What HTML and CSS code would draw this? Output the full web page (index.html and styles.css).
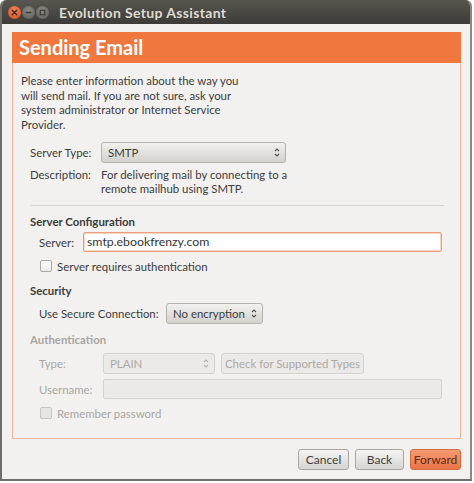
FILE: index.html
```html
<!DOCTYPE html>
<html>
<head>
<meta charset="utf-8">
<link rel="stylesheet" href="styles.css">
</head>
<body>
<div class="window">
  <div class="titlebar">
    <div class="wbtns">
      <span class="wb close"><svg width="9" height="9" viewBox="0 0 10 10"><path d="M2.5 2.5L7.5 7.5M7.5 2.5L2.5 7.5" stroke="#4a2a1a" stroke-width="1.7" stroke-linecap="round"/></svg></span>
      <span class="wb"><svg width="9" height="9" viewBox="0 0 10 10"><path d="M2.5 5H7.5" stroke="#3a3935" stroke-width="1.7" stroke-linecap="round"/></svg></span>
      <span class="wb"><svg width="9" height="9" viewBox="0 0 10 10"><rect x="2.5" y="2.5" width="5" height="5" fill="none" stroke="#3a3935" stroke-width="1.3"/></svg></span>
    </div>
    <div class="title">Evolution Setup Assistant</div>
  </div>
  <div class="client">
    <div class="header">Sending Email</div>
    <div class="panel">
      <p class="intro">Please enter information about the way you<br>will send mail. If you are not sure, ask your<br>system administrator or Internet Service<br>Provider.</p>
      <div class="grid1">
        <div class="lbl">Server Type:</div>
        <div class="combo combo-type"><span>SMTP</span><svg class="arrows" width="6" height="11" viewBox="0 0 6 11"><path d="M1 4L3 2L5 4M1 7L3 9L5 7" fill="none" stroke="#555" stroke-width="1.1"/></svg></div>
        <div class="lbl top">Description:</div>
        <div class="desc">For delivering mail by connecting to a<br>remote mailhub using SMTP.</div>
      </div>
      <div class="sep"></div>
      <div class="section s1">Server Configuration</div>
      <div class="row indent r1">
        <div class="lbl">Server:</div>
        <div class="entry focus">smtp.ebookfrenzy.com</div>
      </div>
      <div class="check indent c1"><span class="box"></span>Server requires authentication</div>
      <div class="section s2">Security</div>
      <div class="row indent r2">
        <div class="lbl wide">Use Secure Connection:</div>
        <div class="combo combo-enc"><span>No encryption</span><svg class="arrows" width="6" height="11" viewBox="0 0 6 11"><path d="M1 4L3 2L5 4M1 7L3 9L5 7" fill="none" stroke="#555" stroke-width="1.1"/></svg></div>
      </div>
      <div class="section dim s3">Authentication</div>
      <div class="grid2 indent">
        <div class="lbl dim">Type:</div>
        <div class="row2">
          <div class="combo combo-auth disabled"><span>PLAIN</span><svg class="arrows" width="6" height="11" viewBox="0 0 6 11"><path d="M1 4L3 2L5 4M1 7L3 9L5 7" fill="none" stroke="#b3b1ad" stroke-width="1.1"/></svg></div>
          <div class="btn disabled">Check for Supported Types</div>
        </div>
        <div class="lbl dim">Username:</div>
        <div class="entry disabled"></div>
      </div>
      <div class="check indent dim c2"><span class="box"></span>Remember password</div>
    </div>
    <div class="actions">
      <div class="btn act">Cancel</div>
      <div class="btn act back">Back</div>
      <div class="btn act fwd">Forward</div>
    </div>
  </div>
</div>
</body>
</html>
```
FILE: styles.css
```css
* { box-sizing: border-box; }
html, body { margin: 0; padding: 0; background: #ffffff; }
body { font-family: Lato, "Open Sans", sans-serif; font-size: 11.4px; color: #3c3c3c; white-space: nowrap; }
.window {
  width: 472px; height: 481px;
  border-left: 2px solid #6f6e6a; border-right: 2px solid #8a8984; border-bottom: 2px solid #6f6e6a;
  border-radius: 6px 6px 0 0;
  background: #f2f1f0;
  display: flex; flex-direction: column;
  overflow: hidden;
}
.titlebar {
  height: 24px; flex: none;
  background: linear-gradient(#57564f, #3c3b37);
  display: flex; align-items: center;
  padding-left: 6px;
}
.wbtns { display: flex; gap: 1px; align-items: center; }
.wb {
  width: 13px; height: 13px; border-radius: 50%;
  background: radial-gradient(circle at 50% 35%, #8c8b86, #5b5a55);
  display: flex; align-items: center; justify-content: center;
}
.wb.close { background: radial-gradient(circle at 50% 35%, #f58a5a, #d9461c); }
.title { margin-left: 10px; color: #dfdbd2; font-weight: bold; font-size: 14px; letter-spacing: 0.35px; }
.client { flex: 1; padding: 8px 9px 0 10px; display: flex; flex-direction: column; }
.header {
  height: 31px; background: #f0783f; color: #fff;
  font-weight: bold; font-size: 20px; padding-left: 7px; line-height: 31px;
}
.panel {
  height: 376px;
  border: 1px solid #eab499; border-top: none;
  padding: 11px 18px 0 8px;
}
.intro { margin: 0; line-height: 14.6px; color: #3c3c3c; }
.grid1 {
  display: grid; grid-template-columns: 62px 185px; column-gap: 9px;
  margin: 10px 0 0 9px; align-items: center; row-gap: 5px;
}
.lbl.top { align-self: start; line-height: 14px; }
.desc { line-height: 14px; align-self: start; }
.combo {
  height: 21px; border: 1px solid #b5b3ae; border-radius: 3px;
  background: linear-gradient(#f2f1ef, #d3d1cc);
  display: flex; align-items: center; justify-content: space-between;
  padding: 0 5px 0 6px; color: #3c3c3c;
}
.sep { height: 1px; background: #d8d6d2; margin: 9px 0 0 9px; width: 414px; }
.section { font-weight: bold; margin: 8px 0 0 9px; line-height: 15px; color: #3c3c3c; }
.section.dim { color: #a8a6a2; }
.s2 { margin-top: 9px; }
.s3 { margin-top: 8px; }
.indent { margin-left: 18px; }
.row { display: flex; align-items: center; gap: 9px; }
.r1 { margin-top: 3px; }
.r2 { margin-top: 5px; }
.lbl.wide { width: 118px; }
.entry {
  height: 20px; flex: 1; border: 1px solid #b5b3ae; border-radius: 2px;
  background: #fff; padding: 0 3px; line-height: 18px; font-size: 12.3px; color: #333;
}
.entry.focus { border-color: #eba07a; box-shadow: inset 0 0 0 1px #f6d4c2; }
.check { display: flex; align-items: center; gap: 5px; margin-top: 6px; height: 16px; padding-left: 1px; }
.box { width: 12px; height: 12px; border: 1px solid #aaa8a3; border-radius: 2px; background: linear-gradient(#fff, #ecebe9); }
.dim { color: #a9a7a3; }
.check.dim .box { background: #e6e5e3; border-color: #c7c5c1; }
.combo-type { width: 185px; }
.combo-enc { width: 97px; flex: none; }
.grid2 { display: grid; grid-template-columns: 55px 1fr; column-gap: 9px; row-gap: 5px; align-items: center; margin-top: 6px; }
.row2 { display: flex; gap: 6px; }
.combo.disabled { width: 112px; background: #ebeae8; border-color: #d4d2ce; color: #aba9a5; }
.btn {
  height: 21px; border: 1px solid #b5b3ae; border-radius: 3px;
  background: linear-gradient(#f6f5f4, #d6d4d0);
  display: flex; align-items: center; justify-content: center; padding: 0 3px;
}
.btn.disabled { background: #ebeae8; border-color: #d4d2ce; color: #aba9a5; width: 143px; }
.entry.disabled { background: #ebeae8; border-color: #d4d2ce; }
.c2 { margin-top: 6px; }
.actions { display: flex; justify-content: flex-end; gap: 6px; margin-top: 10px; padding-right: 0; }
.btn.act { width: 51px; height: 21px; color: #3c3c3c; border-color: #a9a7a2; font-size: 12px; }
.btn.back { width: 49px; }
.btn.fwd { width: 51px; background: linear-gradient(#f79a72, #ea7447); border-color: #d46c44; color: #5a2a14; }
```
